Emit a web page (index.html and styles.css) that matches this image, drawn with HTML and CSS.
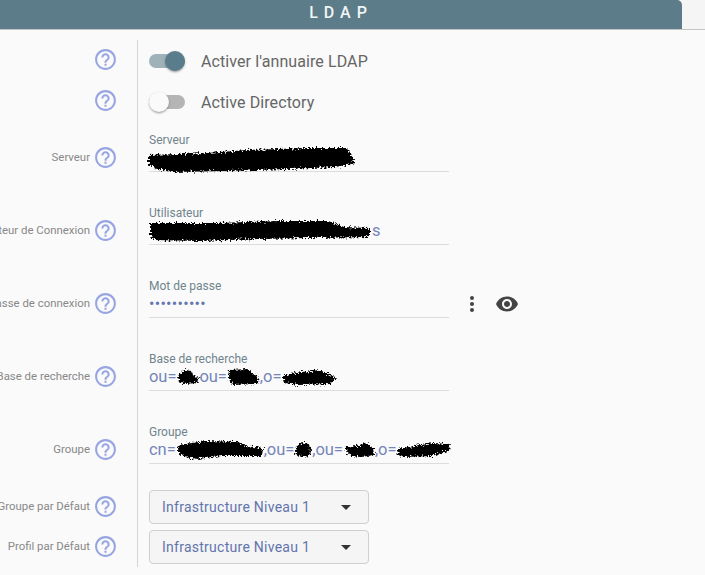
FILE: index.html
```html
<!DOCTYPE html>
<html lang="fr">
<head>
<meta charset="utf-8">
<title>LDAP</title>
<link rel="stylesheet" href="styles.css">
</head>
<body>
<svg class="defs" width="0" height="0" aria-hidden="true">
  <defs>
    <filter id="rough" x="-5%" y="-20%" width="110%" height="140%">
      <feTurbulence type="fractalNoise" baseFrequency="0.55" numOctaves="3" seed="4" result="n"/>
      <feDisplacementMap in="SourceGraphic" in2="n" scale="7" xChannelSelector="R" yChannelSelector="G"/>
    </filter>
    <symbol id="help" viewBox="0 0 24 24"><path d="M11 18h2v-2h-2v2zm1-16C6.48 2 2 6.48 2 12s4.48 10 10 10 10-4.48 10-10S17.52 2 12 2zm0 18c-4.41 0-8-3.59-8-8s3.59-8 8-8 8 3.59 8 8-3.59 8-8 8zm0-14c-2.21 0-4 1.79-4 4h2c0-1.1.9-2 2-2s2 .9 2 2c0 2-3 1.75-3 5h2c0-2.25 3-2.5 3-5 0-2.21-1.79-4-4-4z"/></symbol>
  </defs>
</svg>
<header class="topbar"><h1 class="title">LDAP</h1></header>
<main class="form">
  <div class="row row-toggle">
    <div class="hint"><svg class="help"><use href="#help"/></svg></div>
    <div class="cell"><span class="toggle on"><span class="thumb"></span></span><span class="toggle-label">Activer l'annuaire LDAP</span></div>
  </div>
  <div class="row row-toggle">
    <div class="hint"><svg class="help"><use href="#help"/></svg></div>
    <div class="cell"><span class="toggle"><span class="thumb"></span></span><span class="toggle-label">Active Directory</span></div>
  </div>
  <div class="row row-field">
    <div class="hint"><span class="hint-text">Serveur</span><svg class="help"><use href="#help"/></svg></div>
    <div class="cell">
      <div class="field">
        <label class="field-label">Serveur</label>
        <div class="field-value"><span class="redact w-server"><svg viewBox="0 0 210 24" preserveAspectRatio="none"><path filter="url(#rough)" d="M1 7 L60 5 L100 2 L160 0 L198 0 L204 6 L208 15 L190 19 L140 21 L80 23 L25 24 L10 21 L1 16Z"/></svg></span></div>
      </div>
    </div>
  </div>
  <div class="row row-field">
    <div class="hint"><span class="hint-text">Utilisateur de Connexion</span><svg class="help"><use href="#help"/></svg></div>
    <div class="cell">
      <div class="field">
        <label class="field-label">Utilisateur</label>
        <div class="field-value"><span class="redact w-user"><svg viewBox="0 0 224 20" preserveAspectRatio="none"><path filter="url(#rough)" d="M1 2 L70 2 L130 0 L180 0 L196 6 L222 7 L222 16 L160 17 L110 18 L50 20 L6 19 L1 14Z"/></svg></span><span>s</span></div>
      </div>
    </div>
  </div>
  <div class="row row-field">
    <div class="hint"><span class="hint-text">Mot de passe de connexion</span><svg class="help"><use href="#help"/></svg></div>
    <div class="cell">
      <div class="field">
        <label class="field-label">Mot de passe</label>
        <div class="field-value password">••••••••••</div>
      </div>
      <div class="actions">
        <svg class="icon-more" viewBox="0 0 24 24"><path d="M12 8c1.1 0 2-.9 2-2s-.9-2-2-2-2 .9-2 2 .9 2 2 2zm0 2c-1.1 0-2 .9-2 2s.9 2 2 2 2-.9 2-2-.9-2-2-2zm0 6c-1.1 0-2 .9-2 2s.9 2 2 2 2-.9 2-2-.9-2-2-2z"/></svg>
        <svg class="icon-eye" viewBox="0 0 24 24"><path d="M12 4.5C7 4.5 2.73 7.61 1 12c1.73 4.39 6 7.5 11 7.5s9.27-3.11 11-7.5c-1.73-4.39-6-7.5-11-7.5zM12 17c-2.76 0-5-2.24-5-5s2.24-5 5-5 5 2.24 5 5-2.24 5-5 5zm0-8c-1.66 0-3 1.34-3 3s1.34 3 3 3 3-1.34 3-3-1.34-3-3-3z"/></svg>
      </div>
    </div>
  </div>
  <div class="row row-field">
    <div class="hint"><span class="hint-text">Base de recherche</span><svg class="help"><use href="#help"/></svg></div>
    <div class="cell">
      <div class="field">
        <label class="field-label">Base de recherche</label>
        <div class="field-value">ou=<span class="redact w-a"><svg viewBox="0 0 24 18" preserveAspectRatio="none"><path filter="url(#rough)" d="M2 7 L9 2 L16 3 L19 8 L24 10 L22 15 L9 16 L3 14Z"/></svg></span>ou=<span class="redact w-b"><svg viewBox="0 0 34 18" preserveAspectRatio="none"><path filter="url(#rough)" d="M2 2 L22 1 L27 6 L33 10 L31 16 L6 17 L1 10Z"/></svg></span>,o=<span class="redact w-c"><svg viewBox="0 0 56 18" preserveAspectRatio="none"><path filter="url(#rough)" d="M1 8 L14 5 L38 2 L46 5 L55 10 L50 16 L18 17 L3 15Z"/></svg></span></div>
      </div>
    </div>
  </div>
  <div class="row row-field">
    <div class="hint"><span class="hint-text">Groupe</span><svg class="help"><use href="#help"/></svg></div>
    <div class="cell">
      <div class="field field-wide">
        <label class="field-label">Groupe</label>
        <div class="field-value">cn=<span class="redact w-d"><svg viewBox="0 0 88 18" preserveAspectRatio="none"><path filter="url(#rough)" d="M2 4 L30 0 L62 1 L70 5 L87 7 L86 15 L45 15 L22 18 L8 16 L1 10Z"/></svg></span>,ou=<span class="redact w-e"><svg viewBox="0 0 18 18" preserveAspectRatio="none"><path filter="url(#rough)" d="M2 6 L8 1 L14 3 L17 8 L16 15 L6 16 L1 12Z"/></svg></span>,ou=<span class="redact w-f"><svg viewBox="0 0 32 18" preserveAspectRatio="none"><path filter="url(#rough)" d="M1 6 L14 5 L24 2 L30 7 L31 14 L18 16 L7 15Z"/></svg></span>,o=<span class="redact w-g"><svg viewBox="0 0 54 18" preserveAspectRatio="none"><path filter="url(#rough)" d="M1 8 L18 5 L36 2 L53 3 L52 10 L36 15 L8 16 L2 14Z"/></svg></span></div>
      </div>
    </div>
  </div>
  <div class="row row-select">
    <div class="hint"><span class="hint-text">Groupe par Défaut</span><svg class="help"><use href="#help"/></svg></div>
    <div class="cell"><div class="select"><span class="select-text">Infrastructure Niveau 1</span><span class="caret"></span></div></div>
  </div>
  <div class="row row-select">
    <div class="hint"><span class="hint-text">Profil par Défaut</span><svg class="help"><use href="#help"/></svg></div>
    <div class="cell"><div class="select"><span class="select-text">Infrastructure Niveau 1</span><span class="caret"></span></div></div>
  </div>
</main>
</body>
</html>
```
FILE: styles.css
```css
* { box-sizing: border-box; }
html, body { margin: 0; padding: 0; height: 100%; overflow: hidden; }
body { background: #fafafa; font-family: Roboto, "Liberation Sans", sans-serif; color: #666; }
.defs { position: absolute; }

.topbar { height: 30px; background: #f5f5f5; border-bottom: 1px solid #c4c4c4; }
.title {
  width: 682px; height: 29px; margin: 0;
  background: #5d7c89; border-top-right-radius: 5px;
  color: #f2f5f6; font-size: 16px; font-weight: 500; line-height: 25px;
  letter-spacing: 6px; text-align: center;
}

.form { margin-top: 10px; }
.row { display: flex; }
.row-toggle { height: 41px; }
.row-field { height: 73px; }
.row-select { height: 40px; }

.hint {
  flex: none; width: 138px; padding: 0 20px 2px 0;
  display: flex; align-items: center; justify-content: flex-end; gap: 3px;
  border-right: 1px solid #d4d4d4; overflow: hidden; white-space: nowrap;
}
.hint-text { font-size: 11.4px; font-weight: 400; color: #888; flex: none; margin-bottom: 1px; }
.help { width: 25px; height: 25px; fill: #97a5e2; flex: none; margin-right: -1px; }

.cell { flex: 1; padding-left: 11px; display: flex; align-items: center; }
.row-field .cell { align-items: flex-start; padding-top: 11px; }

.toggle { position: relative; width: 36px; height: 14px; border-radius: 7px; background: #b5b5b5; flex: none; }
.toggle.on { background: #9fb2ba; }
.thumb {
  position: absolute; left: 0; top: -3px; width: 20px; height: 20px; border-radius: 50%;
  background: #fafafa; box-shadow: 0 2px 2px -1px rgba(0,0,0,.25), 0 1px 3px rgba(0,0,0,.2);
}
.toggle.on .thumb { left: 16px; background: #5a7d8b; }
.toggle-label { margin: 1px 0 0 16px; padding-top: 1px; font-size: 16px; letter-spacing: .09px; color: #666; }

.field { width: 300px; border-bottom: 1px solid #dcdcdc; height: 39px; }
.field-label { display: block; font-size: 12px; line-height: 14px; color: #70848d; }
.field-value { padding-top: 1px; font-size: 16.5px; font-weight: 400; letter-spacing: -.05px; line-height: 20px; height: 22px; color: #7585b9; white-space: nowrap; }
.password { font-size: 16px; letter-spacing: .3px; color: #6476b0; }

.actions { display: flex; align-items: center; margin-left: 11px; margin-top: 13px; }
.icon-more { width: 24px; height: 24px; fill: #444; }
.icon-eye { width: 24px; height: 24px; fill: #444; margin-left: 11px; }

.redact { display: inline-block; position: relative; height: 16px; vertical-align: -2px; }
.redact svg { position: absolute; left: 0; top: 0; width: 100%; height: 18px; fill: #000; overflow: visible; }
.w-server { width: 210px; margin-left: -2px; }
.w-server svg { height: 24px; top: -1px; }
.w-user { width: 223px; }
.w-user svg { top: -1px; height: 20px; }
.w-a { width: 23px; }
.w-b { width: 33px; }
.w-c { width: 56px; }
.w-d { width: 88px; }
.w-e { width: 18px; }
.w-f { width: 32px; }
.w-g { width: 55px; }

.select {
  width: 220px; height: 34px;
  display: flex; align-items: center; justify-content: space-between;
  padding: 0 17px 0 12px;
  background: #f5f5f5; border: 1px solid #cfcfcf; border-radius: 4px;
}
.select-text { font-size: 14px; letter-spacing: .26px; color: #6274ad; }
.caret { width: 0; height: 0; border-left: 5px solid transparent; border-right: 5px solid transparent; border-top: 5px solid #333; }
```
